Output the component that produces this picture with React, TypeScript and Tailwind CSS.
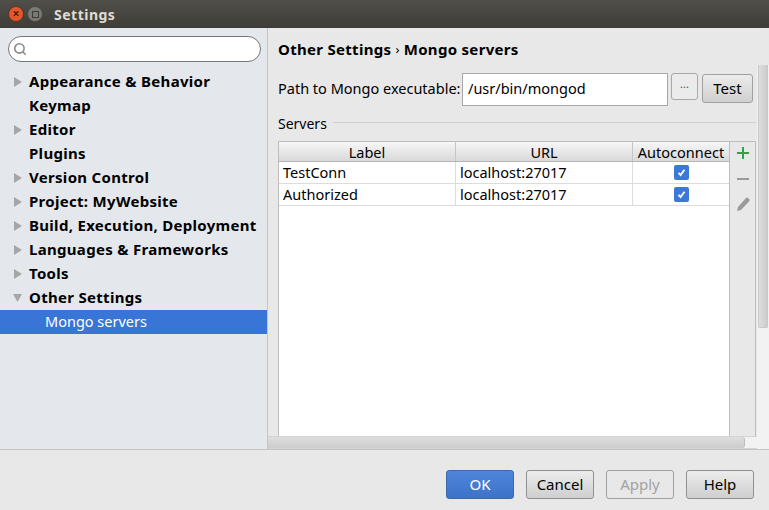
import { Search } from 'lucide-react';

const treeItems = [
  { name: 'Appearance & Behavior', arrow: 'right' },
  { name: 'Keymap' },
  { name: 'Editor', arrow: 'right' },
  { name: 'Plugins' },
  { name: 'Version Control', arrow: 'right' },
  { name: 'Project: MyWebsite', arrow: 'right' },
  { name: 'Build, Execution, Deployment', arrow: 'right' },
  { name: 'Languages & Frameworks', arrow: 'right' },
  { name: 'Tools', arrow: 'right' },
  { name: 'Other Settings', arrow: 'down' },
];

const servers = ['TestConn', 'Authorized'];

function Checkbox() {
  return (
    <div className="w-[15px] h-[15px] rounded-[2px] bg-[#3c78d8] flex items-center justify-center">
      <svg width="11" height="11" viewBox="0 0 11 11" fill="none">
        <path d="M2.5 5.8 L4.6 8 L8.5 2.8" stroke="white" strokeWidth="1.9" />
      </svg>
    </div>
  );
}

function DialogButton({ label, primary, disabled }: { label: string; primary?: boolean; disabled?: boolean }) {
  let cls = 'border-[#8f8f8f] bg-gradient-to-b from-[#ececec] to-[#cfcfcf] text-black';
  if (primary) cls = 'border-[#3a69ad] bg-gradient-to-b from-[#4f86dc] to-[#3c73c9] text-white';
  if (disabled) cls = 'border-[#a0a0a0] bg-[#e8e8e8] text-[#a3a3a3]';
  return (
    <button className={`w-[68px] h-[29px] rounded-[3px] border text-[15px] flex items-center justify-center ${cls}`}>
      {label}
    </button>
  );
}

export default function App() {
  return (
    <div className="w-[769px] h-[510px] flex flex-col overflow-hidden bg-[#e8e8e8] text-black font-['Noto_Sans',sans-serif]">
      {/* Title bar */}
      <div className="h-[28px] shrink-0 flex items-center pl-[8px] bg-gradient-to-b from-[#504f49] to-[#3d3c37]">
        <div className="w-[16px] h-[16px] rounded-full bg-[#e4572b] border border-[#5a3325] flex items-center justify-center text-[#4a2015] text-[12px] leading-none font-bold">
          ×
        </div>
        <div className="ml-[3px] w-[16px] h-[16px] rounded-full bg-[#7a7a74] border border-[#4a4a45] flex items-center justify-center">
          <div className="w-[7px] h-[7px] border border-[#3d3d38]" />
        </div>
        <span className="ml-[11px] text-[14px] font-bold tracking-[0.5px] text-[#dfdbd2]">Settings</span>
      </div>

      <div className="flex-1 flex min-h-0">
        {/* Sidebar */}
        <div className="w-[268px] shrink-0 flex flex-col bg-[#e4e8ec] border-r border-[#c4c4c4]">
          <div className="pt-[8px] pb-[8px] pl-[8px] pr-[6px]">
            <div className="h-[26px] rounded-full bg-white border border-[#767676] flex items-center pl-[4px]">
              <Search size={14} strokeWidth={2.8} className="text-[#8c8c8c]" />
            </div>
          </div>
          {treeItems.map((item) => (
            <div key={item.name} className="h-[24px] flex items-center">
              <div className="w-[29px] flex justify-center pl-[10px] pr-[4px]">
                {item.arrow === 'right' && (
                  <svg width="8" height="10" viewBox="0 0 8 10">
                    <path d="M0 0 L8 5 L0 10 Z" fill="#a6a6a6" />
                  </svg>
                )}
                {item.arrow === 'down' && (
                  <svg width="9" height="8" viewBox="0 0 9 8">
                    <path d="M0 0 L9 0 L4.5 8 Z" fill="#a6a6a6" />
                  </svg>
                )}
              </div>
              <span className="text-[15px] font-bold tracking-[0.3px] whitespace-nowrap pb-[2px]">{item.name}</span>
            </div>
          ))}
          <div className="h-[24px] flex items-center pl-[45px] pb-[1px] bg-[#3875d7] text-white text-[14.5px]">Mongo servers</div>
        </div>

        {/* Settings panel */}
        <div className="flex-1 min-w-0 flex">
          <div className="flex-1 min-w-0 flex flex-col">
            <div className="flex-1 min-h-0 flex flex-col pl-[10px] pr-[1px]">
              <div className="h-[45px] shrink-0 flex items-center text-[15px] font-bold tracking-[0.3px] whitespace-nowrap pb-[2px]">
                Other Settings <span className="font-normal mx-[4px] text-[13px]">›</span> Mongo servers
              </div>
              <div className="flex items-start h-[34px] shrink-0">
                <span className="text-[14.5px] w-[184px] h-[31px] flex items-center whitespace-nowrap">Path to Mongo executable:</span>
                <div className="w-[206px] h-[33px] bg-white border border-[#a8a8a8] flex items-center pl-[5px] pb-[1px] text-[14.5px]">
                  /usr/bin/mongod
                </div>
                <button className="ml-[3px] w-[27px] h-[27px] rounded-[3px] border border-[#a8a8a8] bg-[#ebebeb] text-[11px] text-[#555] flex items-center justify-center pb-[4px]">
                  ...
                </button>
                <button className="ml-[4px] mt-[1px] w-[51px] h-[29px] rounded-[3px] border border-[#a0a0a0] bg-gradient-to-b from-[#ececec] to-[#cfcfcf] text-[15px] flex items-center justify-center">
                  Test
                </button>
              </div>
              <div className="flex items-center mt-[6px] h-[20px] shrink-0">
                <span className="text-[14px] mr-[6px]">Servers</span>
                <div className="flex-1 h-px mb-[2px] bg-[#cfcfcf]" />
              </div>
              <div className="flex-1 min-h-0 mt-[8px] flex border border-b-0 border-[#bdbdbd]">
                <div className="flex-1 min-w-0 bg-white flex flex-col border-r border-[#bdbdbd]">
                  <div className="flex h-[20px] shrink-0 border-b border-[#b5b5b5] bg-gradient-to-b from-[#f7f7f7] to-[#d9d9d9] text-[14.5px] leading-[20px] text-center">
                    <div className="w-[177px] border-r border-[#c6c6c6]">Label</div>
                    <div className="w-[177px] border-r border-[#c6c6c6]">URL</div>
                    <div className="flex-1 whitespace-nowrap">Autoconnect</div>
                  </div>
                  {servers.map((name) => (
                    <div key={name} className="flex h-[22px] shrink-0 border-b border-[#dcdcdc] text-[14.5px] leading-[21px]">
                      <div className="w-[177px] border-r border-[#dcdcdc] pl-[4px]">{name}</div>
                      <div className="w-[177px] border-r border-[#dcdcdc] pl-[4px]">localhost:27017</div>
                      <div className="flex-1 flex items-center justify-center pb-[1px]">
                        <Checkbox />
                      </div>
                    </div>
                  ))}
                </div>
                {/* Toolbar */}
                <div className="w-[25px] shrink-0 flex flex-col items-center pt-[3px]">
                  <svg width="16" height="16" viewBox="0 0 16 16">
                    <path d="M8 2 V14 M2 8 H14" stroke="#35a04a" strokeWidth="2" />
                  </svg>
                  <svg width="16" height="16" viewBox="0 0 16 16" className="mt-[10px]">
                    <path d="M2 8 H14" stroke="#9a9a9a" strokeWidth="2" />
                  </svg>
                  <svg width="16" height="16" viewBox="0 0 16 16" className="mt-[9px]">
                    <path d="M2 15 L3 11 L11 2 Q12 1 13 2 L14.5 3.5 Q15 4.5 14 5.5 L6 14 Z" fill="#9a9a9a" />
                  </svg>
                </div>
              </div>
            </div>
            {/* Horizontal scrollbar */}
            <div className="h-[13px] shrink-0 flex border-y border-[#d4d4d4] bg-[#f2f2f2]">
              <div className="w-[477px] rounded-r-[3px] bg-gradient-to-b from-[#dedede] to-[#cccccc] border-r border-[#bdbdbd]" />
            </div>
          </div>
          {/* Vertical scrollbar */}
          <div className="w-[12px] shrink-0 flex flex-col pt-[37px]">
            <div className="flex-1 bg-[#f2f2f2] pl-[1px] pr-[1px]">
              <div className="h-[263px] rounded-b-[2px] bg-gradient-to-r from-[#dedede] to-[#cccccc] border border-t-0 border-[#c8c8c8]" />
            </div>
          </div>
        </div>
      </div>

      {/* Footer */}
      <div className="h-[61px] shrink-0 border-t border-[#c4c4c4] flex items-start justify-end gap-[12px] pt-[20px] pr-[15px]">
        <DialogButton label="OK" primary />
        <DialogButton label="Cancel" />
        <DialogButton label="Apply" disabled />
        <DialogButton label="Help" />
      </div>
    </div>
  );
}
